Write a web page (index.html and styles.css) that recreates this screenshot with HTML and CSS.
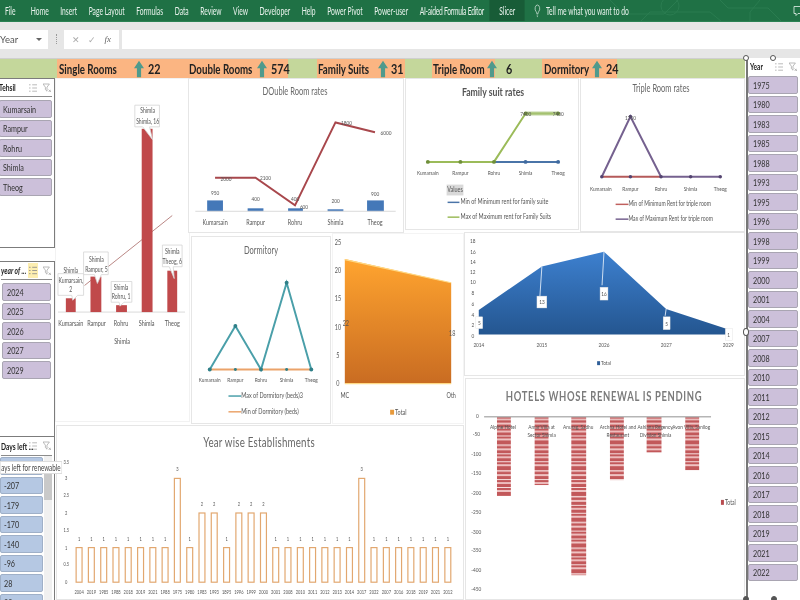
FILE: index.html
```html
<!DOCTYPE html>
<html lang="en">
<head>
<meta charset="utf-8">
<title>Hotel dashboard</title>
<link rel="stylesheet" href="styles.css">
</head>
<body>
<div class="app">
  <header class="ribbon">
    <svg class="circuit" viewBox="0 0 200 22"><path d="M10 0l14 14h40l14-14M40 22l10-10h60l12 10M120 0l8 8h40l14 14M150 22V12l10-12"/><circle cx="70" cy="6" r="9"/></svg>
    <nav class="tabs">
      <span class="tab">File</span><span class="tab">Home</span><span class="tab">Insert</span><span class="tab">Page Layout</span><span class="tab">Formulas</span><span class="tab">Data</span><span class="tab">Review</span><span class="tab">View</span><span class="tab">Developer</span><span class="tab">Help</span><span class="tab">Power Pivot</span><span class="tab">Power-user</span><span class="tab tab-ai">AI-aided Formula Editor</span><span class="tab tab-active">Slicer</span>
      <span class="tell">
        <svg class="bulb" viewBox="0 0 10 14"><path d="M5 1a3.600 3.600 0 0 0-2 6.600c.5.400.7 1 .7 1.800h2.600c0-.8.2-1.400.7-1.800A3.600 3.600 0 0 0 5 1zM3.800 11h2.400M4.200 12.600h1.600"/></svg>
        Tell me what you want to do
      </span>
    </nav>
    <svg class="comment" viewBox="0 0 12 12"><path d="M1 1.500h10v7H5l-2 2v-2H1z"/></svg>
  </header>

  <div class="formula-bar">
    <div class="namebox"><span>Year</span><span class="caret"></span></div>
    <span class="grip"></span>
    <div class="fx-box"><span class="fx-x">✕</span><span class="fx-check">✓</span><span class="fx-f">fx</span></div>
    <div class="formula-input"></div>
  </div>

  <main class="workspace">
    <div class="kpi-bar">
      <div class="kpi kpi-single"><b class="kpi-name">Single Rooms</b><svg class="up" viewBox="0 0 12 20"><path d="M6 0l6 9H8.500v11h-5V9H0z"/></svg><b class="kpi-num">22</b></div>
      <div class="kpi kpi-double"><b class="kpi-name">Double Rooms</b><svg class="up" viewBox="0 0 12 20"><path d="M6 0l6 9H8.500v11h-5V9H0z"/></svg><b class="kpi-num">574</b></div>
      <div class="kpi kpi-family"><b class="kpi-name">Family Suits</b><svg class="up" viewBox="0 0 12 20"><path d="M6 0l6 9H8.500v11h-5V9H0z"/></svg><b class="kpi-num">31</b></div>
      <div class="kpi kpi-triple"><b class="kpi-name">Triple Room</b><svg class="up" viewBox="0 0 12 20"><path d="M6 0l6 9H8.500v11h-5V9H0z"/></svg><b class="kpi-num">6</b></div>
      <div class="kpi kpi-dorm"><b class="kpi-name">Dormitory</b><svg class="up" viewBox="0 0 12 20"><path d="M6 0l6 9H8.500v11h-5V9H0z"/></svg><b class="kpi-num">24</b></div>
    </div>

    <!-- Bar chart -->
    <section class="chart c-shimla">
      <svg viewBox="55 78 135 344" class="plot">
        <line x1="57" y1="313" x2="186" y2="313" class="axis"/>
        <line x1="84" y1="286" x2="173" y2="215" class="trend"/>
        <g class="red">
          <rect x="65" y="299" width="10" height="14"/><rect x="90" y="277" width="11" height="36"/><rect x="116" y="306" width="11" height="7"/><rect x="142" y="127" width="11" height="186"/><rect x="168" y="271" width="10" height="42"/>
        </g>
        <g class="callout">
          <path d="M57 274h26v22H77l-5 5-1-5H57z"/>
          <path d="M83 252h25v23H101l-4 9-3-9H83z"/>
          <path d="M111 282h21v21h-8l-4 4-1-4h-8z"/>
          <path d="M135 103h25v22h-10l3 13-10-13h-8z"/>
          <path d="M163 245h20v22h-9l1 12-5-12h-7z"/>
        </g>
        <g class="tx t65 mid">
          <text x="70" y="273">Shimla</text><text x="70" y="283">Kumarsain,</text><text x="70" y="293">2</text>
          <text x="96" y="262">Shimla</text><text x="96" y="272">Rampur, 5</text>
          <text x="121" y="291">Shimla</text><text x="121" y="300">Rohru, 1</text>
          <text x="148" y="111">Shimla</text><text x="148" y="122">Shimla, 16</text>
          <text x="173" y="254">Shimla</text><text x="173" y="264">Theog, 6</text>
        </g>
        <g class="tx t7 mid">
          <text x="70" y="327">Kumarsain</text><text x="96" y="327">Rampur</text><text x="121" y="327">Rohru</text><text x="147" y="327">Shimla</text><text x="173" y="327">Theog</text>
          <text x="122" y="345">Shimla</text>
        </g>
      </svg>
    </section>

    <!-- Double room rates -->
    <section class="chart c-double">
      <svg viewBox="188 78 216 155" class="plot">
        <text x="295" y="94" class="title mid">DOuble Room rates</text>
        <g class="blue"><rect x="206" y="201" width="16" height="11"/><rect x="247" y="209" width="16" height="3"/><rect x="288" y="209" width="15" height="3"/><rect x="328" y="210" width="16" height="2"/><rect x="368" y="201" width="17" height="11"/></g>
        <line x1="194" y1="212" x2="397" y2="212" class="axis"/>
        <polyline points="214,178 255,178 295,206 336,122 376,132" class="ln ln-red"/>
        <g class="tx t6 mid">
          <text x="225" y="181">2000</text><text x="265" y="180">2100</text><text x="304" y="210">600</text><text x="347" y="125">1800</text><text x="387" y="135">6000</text>
          <text x="214" y="196">950</text><text x="255" y="202">400</text><text x="295" y="202">400</text><text x="336" y="204">200</text><text x="376" y="197">900</text>
        </g>
        <g class="tx t7 mid"><text x="214" y="226">Kumarsain</text><text x="255" y="226">Rampur</text><text x="295" y="226">Rohru</text><text x="336" y="226">Shimla</text><text x="376" y="226">Theog</text></g>
      </svg>
    </section>

    <!-- Family suit rates -->
    <section class="chart c-family">
      <svg viewBox="405 78 174 152" class="plot">
        <text x="493" y="95" class="title title-b mid">Family suit rates</text>
        <polyline points="427,162 559,162" class="ln ln-blue"/>
        <polyline points="427,162 460,162 494,162 526,113 559,113" class="ln ln-green"/>
        <polyline points="526,113 559,113" class="ln ln-glow"/>
        <g class="dot-blue"><circle cx="526" cy="162" r="2"/><circle cx="559" cy="162" r="2"/></g>
        <g class="dot-green"><circle cx="427" cy="162" r="2"/><circle cx="460" cy="162" r="2"/><circle cx="494" cy="162" r="2"/><circle cx="526" cy="113" r="2"/><circle cx="559" cy="113" r="2"/></g>
        <g class="tx t6 mid"><text x="526" y="116">7400</text><text x="559" y="116">7400</text>
          <text x="427" y="175">Kumarsain</text><text x="460" y="175">Rampur</text><text x="494" y="175">Rohru</text><text x="526" y="175">Shimla</text><text x="559" y="175">Theog</text></g>
        <rect x="446" y="185" width="17" height="11" class="chip"/>
        <text x="454.500" y="193" class="tx t7 mid">Values</text>
        <line x1="447" y1="203" x2="459" y2="203" class="ln-legend blue-s"/><line x1="447" y1="218" x2="459" y2="218" class="ln-legend green-s"/>
        <g class="tx t7 start"><text x="460" y="205">Min of Minimum rent for family suite</text><text x="460" y="220">Max of Maximum rent for Family Suits</text></g>
      </svg>
    </section>

    <!-- Triple room rates -->
    <section class="chart c-triple">
      <svg viewBox="580 78 165 154" class="plot">
        <text x="661" y="91" class="title mid">Triple Room rates</text>
        <polyline points="601,177 661,177" class="ln ln-red2"/>
        <polyline points="601,177 630,116 661,177 691,177 721,177" class="ln ln-purple"/>
        <g class="dot-purple"><circle cx="601" cy="177" r="1.800"/><circle cx="630" cy="177" r="1.800"/><circle cx="661" cy="177" r="1.800"/><circle cx="691" cy="177" r="1.800"/><circle cx="721" cy="177" r="1.800"/><circle cx="630" cy="116" r="1.800"/></g>
        <g class="tx t6 mid"><text x="630" y="120">1700</text><text x="600" y="191">Kumarsain</text><text x="630" y="191">Rampur</text><text x="661" y="191">Rohru</text><text x="691" y="191">Shimla</text><text x="721" y="191">Theog</text></g>
        <line x1="615" y1="205" x2="628" y2="205" class="ln-legend red-s"/><line x1="615" y1="220" x2="628" y2="220" class="ln-legend purple-s"/>
        <g class="tx t65 start"><text x="628" y="207">Min of Minimum Rent for triple room</text><text x="628" y="222">Max of Maximum Rent for triple room</text></g>
      </svg>
    </section>

    <!-- Dormitory -->
    <section class="chart c-dorm">
      <svg viewBox="191 236 140 188" class="plot">
        <text x="261" y="253" class="title mid">Dormitory</text>
        <line x1="209" y1="370" x2="312" y2="370" class="ln ln-orange"/>
        <polyline points="209,370 235,326 261,370 287,282 312,370" class="ln ln-teal"/>
        <g class="dot-teal"><circle cx="209" cy="370" r="2"/><circle cx="235" cy="326" r="2"/><circle cx="261" cy="370" r="2"/><circle cx="287" cy="282" r="2"/><circle cx="312" cy="370" r="2"/><circle cx="235" cy="370" r="1.500"/><circle cx="287" cy="370" r="1.500"/></g>
        <g class="tx t6 mid"><text x="209" y="383">Kumarsain</text><text x="235" y="383">Rampur</text><text x="261" y="383">Rohru</text><text x="287" y="383">Shimla</text><text x="312" y="383">Theog</text></g>
        <line x1="228" y1="397" x2="241" y2="397" class="ln-legend teal-s"/><line x1="228" y1="413" x2="241" y2="413" class="ln-legend orange-s"/>
        <g class="tx t7 start"><text x="241" y="399">Max of Dormitory (beds)3</text><text x="241" y="415">Min of Dormitory (beds)</text></g>
      </svg>
    </section>

    <!-- Orange area -->
    <section class="chart c-orange">
      <svg viewBox="332 233 132 191" class="plot">
        <defs><linearGradient id="og" x1="0" y1="0" x2="0" y2="1"><stop offset="0" stop-color="#ffa42f"/><stop offset="1" stop-color="#c96c22"/></linearGradient></defs>
        <polygon points="344,258 452,282 452,384 344,384" fill="url(#og)"/>
        <polyline points="344,258.500 452,282" class="edge"/>
        <line x1="344" y1="384.500" x2="452" y2="384.500" class="edge"/>
        <g class="tx t7 mid"><text x="337" y="244">25</text><text x="337" y="272">20</text><text x="337" y="301">15</text><text x="337" y="330">10</text><text x="337" y="358">5</text><text x="337" y="387">0</text>
          <text x="344" y="399">MC</text><text x="452" y="399">Oth</text><text x="345" y="326">22</text><text x="453" y="336">18</text></g>
        <rect x="390" y="411" width="4" height="5" class="sw-orange"/>
        <text x="395" y="416" class="tx t7 start">Total</text>
      </svg>
    </section>

    <!-- Blue area -->
    <section class="chart c-blue">
      <svg viewBox="464 232 281 144" class="plot">
        <defs><linearGradient id="bg" x1="0" y1="0" x2="0" y2="1"><stop offset="0" stop-color="#3d80cf"/><stop offset="1" stop-color="#245690"/></linearGradient></defs>
        <polygon points="477,310 541,266 604,251 667,309 728,329 728,335 477,335" fill="url(#bg)"/>
        <g class="leader"><line x1="541" y1="266" x2="539" y2="296"/><line x1="604" y1="251" x2="602" y2="285"/><line x1="667" y1="309" x2="666" y2="316"/></g>
        <g class="labelbox"><rect x="474" y="317" width="7" height="12"/><rect x="536" y="296" width="10" height="12"/><rect x="600" y="287" width="8" height="13"/><rect x="664" y="317" width="7" height="13"/><rect x="727" y="329" width="7" height="12"/></g>
        <g class="tx t6 mid">
          <text x="471" y="242">18</text><text x="471" y="253">16</text><text x="471" y="263">14</text><text x="471" y="274">12</text><text x="471" y="284">10</text><text x="471" y="295">8</text><text x="471" y="306">6</text><text x="471" y="317">4</text><text x="471" y="327">2</text><text x="471" y="338">0</text>
          <text x="477.500" y="325">5</text><text x="541" y="304">13</text><text x="604" y="296">16</text><text x="667.500" y="326">5</text><text x="730.500" y="337">1</text>
          <text x="477" y="348">2014</text><text x="541" y="348">2015</text><text x="604" y="348">2026</text><text x="667" y="348">2027</text><text x="730" y="348">2029</text>
          <text x="606" y="366">Total</text></g>
        <rect x="597" y="362" width="3" height="4" class="sw-blue"/>
      </svg>
    </section>

    <!-- Hotels renewal -->
    <section class="chart c-hotels">
      <svg viewBox="465 378 280 222" class="plot">
        <defs>
          <pattern id="stripes" width="14" height="26" patternUnits="userSpaceOnUse">
            <rect width="14" height="26" fill="#c2585a"/>
            <rect y="2" width="14" height="1.500" fill="#f3d3d3"/><rect y="6" width="14" height="2" fill="#efc3c3"/><rect y="11" width="14" height="1" fill="#f7e0e0"/><rect y="14" width="14" height="2" fill="#edbcbc"/><rect y="19" width="14" height="1" fill="#f7e0e0"/><rect y="22" width="14" height="2" fill="#efc3c3"/>
          </pattern>
        </defs>
        <text x="604" y="400" class="title title-h mid">HOTELS WHOSE RENEWAL IS PENDING</text>
        <g fill="url(#stripes)"><rect x="496" y="416" width="14" height="80"/><rect x="534" y="416" width="14" height="69"/><rect x="571" y="416" width="15" height="160"/><rect x="610" y="416" width="14" height="64"/><rect x="647" y="416" width="15" height="36"/><rect x="686" y="416" width="14" height="54"/></g>
        <line x1="483" y1="416" x2="712" y2="416" class="axis-dark"/>
        <g class="tx t6 mid">
          <text x="476" y="417">0</text><text x="475" y="436">-50</text><text x="475" y="456">-100</text><text x="475" y="475">-150</text><text x="475" y="495">-200</text><text x="475" y="514">-250</text><text x="475" y="534">-300</text><text x="475" y="553">-350</text><text x="475" y="573">-400</text><text x="475" y="592">-450</text>
          <text x="502" y="428">Alpine Hotel</text><text x="541" y="428">Amar Villa at</text><text x="541" y="437">Sector Shimla</text><text x="578" y="428">Anurag, Sadhu</text><text x="618" y="428">Archna Hotel and</text><text x="618" y="437">Restaurant</text><text x="656" y="428">Ashiana Regency,</text><text x="656" y="437">Division Shimla</text><text x="692" y="428">Avon Villa, Sanilog</text>
        </g>
        <rect x="722" y="500" width="3" height="5" class="sw-red"/>
        <text x="726" y="505" class="tx t65 start">Total</text>
      </svg>
    </section>

    <!-- Year wise -->
    <section class="chart c-year">
      <svg viewBox="56 425 408 175" class="plot">
        <text x="259" y="446" class="title title-l mid">Year wise Establishments</text>
        <g class="tx t5 mid"><text x="64" y="463">3.5</text><text x="64" y="480">3</text><text x="64" y="497">2.5</text><text x="64" y="515">2</text><text x="64" y="532">1.5</text><text x="64" y="550">1</text><text x="64" y="567">0.5</text><text x="64" y="585">0</text></g>
        <g class="outline-bars">
          <rect x="74" y="548" width="6" height="35"/><rect x="86.400" y="548" width="6" height="35"/><rect x="98.900" y="548" width="6" height="35"/><rect x="111.300" y="548" width="6" height="35"/><rect x="123.700" y="548" width="6" height="35"/><rect x="136.200" y="548" width="6" height="35"/><rect x="148.600" y="548" width="6" height="35"/><rect x="161" y="548" width="6" height="35"/>
          <rect x="173.400" y="478" width="6" height="105"/><rect x="185.900" y="548" width="6" height="35"/><rect x="198.300" y="513" width="6" height="70"/><rect x="210.700" y="513" width="6" height="70"/><rect x="223.200" y="548" width="6" height="35"/><rect x="235.600" y="513" width="6" height="70"/><rect x="248" y="513" width="6" height="70"/><rect x="260.500" y="513" width="6" height="70"/>
          <rect x="272.900" y="548" width="6" height="35"/><rect x="285.300" y="548" width="6" height="35"/><rect x="297.800" y="548" width="6" height="35"/><rect x="310.200" y="548" width="6" height="35"/><rect x="322.600" y="548" width="6" height="35"/><rect x="335" y="548" width="6" height="35"/><rect x="347.500" y="548" width="6" height="35"/>
          <rect x="359.900" y="478" width="6" height="105"/><rect x="372.300" y="548" width="6" height="35"/><rect x="384.800" y="548" width="6" height="35"/><rect x="397.200" y="548" width="6" height="35"/><rect x="409.600" y="548" width="6" height="35"/><rect x="422.100" y="548" width="6" height="35"/><rect x="434.500" y="548" width="6" height="35"/><rect x="447" y="548" width="6" height="35"/>
        </g>
        <g class="tx t5 mid">
          <text x="77" y="541">1</text><text x="89.400" y="541">1</text><text x="101.900" y="541">1</text><text x="114.300" y="541">1</text><text x="126.700" y="541">1</text><text x="139.200" y="541">1</text><text x="151.600" y="541">1</text><text x="164" y="541">1</text><text x="176.400" y="471">3</text><text x="188.900" y="541">1</text><text x="201.300" y="506">2</text><text x="213.700" y="506">2</text><text x="226.200" y="541">1</text><text x="238.600" y="506">2</text><text x="251" y="506">2</text><text x="263.500" y="506">2</text><text x="275.900" y="541">1</text><text x="288.300" y="541">1</text><text x="300.800" y="541">1</text><text x="313.200" y="541">1</text><text x="325.600" y="541">1</text><text x="338" y="541">1</text><text x="350.500" y="541">1</text><text x="362.900" y="471">3</text><text x="375.300" y="541">1</text><text x="387.800" y="541">1</text><text x="400.200" y="541">1</text><text x="412.600" y="541">1</text><text x="425.100" y="541">1</text><text x="437.500" y="541">1</text><text x="450" y="541">1</text>
          <text x="77" y="595">2004</text><text x="89.400" y="595">2019</text><text x="101.900" y="595">1985</text><text x="114.300" y="595">1988</text><text x="126.700" y="595">2018</text><text x="139.200" y="595">2019</text><text x="151.600" y="595">2021</text><text x="164" y="595">1988</text><text x="176.400" y="595">1975</text><text x="188.900" y="595">1980</text><text x="201.300" y="595">1983</text><text x="213.700" y="595">1993</text><text x="226.200" y="595">1895</text><text x="238.600" y="595">1996</text><text x="251" y="595">1999</text><text x="263.500" y="595">2000</text><text x="275.900" y="595">2001</text><text x="288.300" y="595">2008</text><text x="300.800" y="595">2010</text><text x="313.200" y="595">2011</text><text x="325.600" y="595">2012</text><text x="338" y="595">2013</text><text x="350.500" y="595">2014</text><text x="362.900" y="595">2017</text><text x="375.300" y="595">2022</text><text x="387.800" y="595">2007</text><text x="400.200" y="595">2016</text><text x="412.600" y="595">2018</text><text x="425.100" y="595">2019</text><text x="437.500" y="595">2021</text><text x="450" y="595">2012</text>
        </g>
      </svg>
    </section>

    <!-- Slicers -->
    <aside class="slicer s-tehsil">
      <div class="slicer-head"><b class="head-name">Tehsil</b>
        <svg class="ic" viewBox="0 0 10 12"><path d="M0 2h2M0 6h2M0 10h2M4 2h6M4 6h6M4 10h6"/></svg>
        <svg class="ic" viewBox="0 0 10 12"><path d="M0 1h8L5 5v5L3 8V5zM7 8l3 3M10 8l-3 3"/></svg>
      </div>
      <div class="items">
        <div class="item"><span>Kumarsain</span></div><div class="item"><span>Rampur</span></div><div class="item"><span>Rohru</span></div><div class="item"><span>Shimla</span></div><div class="item"><span>Theog</span></div>
      </div>
    </aside>

    <aside class="slicer s-yearof">
      <div class="slicer-head"><b class="head-name head-i">year of ...</b>
        <svg class="ic ic-on" viewBox="0 0 10 12"><path d="M0 2h2M0 6h2M0 10h2M4 2h6M4 6h6M4 10h6"/></svg>
        <svg class="ic" viewBox="0 0 10 12"><path d="M0 1h8L5 5v5L3 8V5zM7 8l3 3M10 8l-3 3"/></svg>
      </div>
      <div class="items">
        <div class="item"><span>2024</span></div><div class="item"><span>2025</span></div><div class="item"><span>2026</span></div><div class="item"><span>2027</span></div><div class="item"><span>2029</span></div>
      </div>
    </aside>

    <aside class="slicer s-days">
      <div class="slicer-head"><b class="head-name">Days left ...</b>
        <svg class="ic" viewBox="0 0 10 12"><path d="M0 2h2M0 6h2M0 10h2M4 2h6M4 6h6M4 10h6"/></svg>
        <svg class="ic" viewBox="0 0 10 12"><path d="M0 1h8L5 5v5L3 8V5zM7 8l3 3M10 8l-3 3"/></svg>
      </div>
      <div class="days-body">
        <div class="items items-blue">
          <div class="item item-blue item-hidden"></div><div class="item item-blue"><span>-207</span></div><div class="item item-blue"><span>-179</span></div><div class="item item-blue"><span>-170</span></div><div class="item item-blue"><span>-140</span></div><div class="item item-blue"><span>-96</span></div><div class="item item-blue"><span>28</span></div><div class="item item-blue"><span>32</span></div>
        </div>
        <div class="scrollbar"><span class="thumb"></span></div>
      </div>
      <div class="tooltip">ays left for renewable</div>
    </aside>

    <aside class="slicer s-year">
      <div class="slicer-head"><b class="head-name">Year</b>
        <svg class="ic" viewBox="0 0 10 12"><path d="M0 2h2M0 6h2M0 10h2M4 2h6M4 6h6M4 10h6"/></svg>
        <svg class="ic" viewBox="0 0 10 12"><path d="M0 1h8L5 5v5L3 8V5zM7 8l3 3M10 8l-3 3"/></svg>
      </div>
      <div class="items items-year">
        <div class="item"><span>1975</span></div><div class="item"><span>1980</span></div><div class="item"><span>1983</span></div><div class="item"><span>1985</span></div><div class="item"><span>1988</span></div><div class="item"><span>1993</span></div><div class="item"><span>1995</span></div><div class="item"><span>1996</span></div><div class="item"><span>1998</span></div><div class="item"><span>1999</span></div><div class="item"><span>2000</span></div><div class="item"><span>2001</span></div><div class="item"><span>2004</span></div><div class="item"><span>2007</span></div><div class="item"><span>2008</span></div><div class="item"><span>2010</span></div><div class="item"><span>2011</span></div><div class="item"><span>2012</span></div><div class="item"><span>2015</span></div><div class="item"><span>2014</span></div><div class="item"><span>2016</span></div><div class="item"><span>2017</span></div><div class="item"><span>2018</span></div><div class="item"><span>2019</span></div><div class="item"><span>2021</span></div><div class="item"><span>2022</span></div>
      </div>
      <span class="handle h-tl"></span><span class="handle h-tm"></span><span class="handle h-ml"></span><span class="handle h-bl"></span><span class="handle h-bm"></span>
    </aside>
  </main>
</div>
</body>
</html>
```

FILE: styles.css
```css
* { box-sizing: border-box; }
html, body { margin: 0; height: 100%; overflow: hidden; background: #fff; }
.app {
  width: 800px; height: 600px; overflow: hidden;
  font-family: Lato, "Liberation Sans", sans-serif;
  color: #333; display: flex; flex-direction: column;
  filter: blur(0.5px);
}

/* ribbon */
.ribbon { position: relative; height: 22px; background: #1f7145; border-bottom: 1px solid #2a8253; display: flex; align-items: center; color: #e8f2ec; font-size: 10.5px; flex: none; overflow: hidden; }
.circuit { position: absolute; left: 600px; top: 0; width: 200px; height: 22px; fill: none; stroke: #2a7c50; stroke-width: 1; }
.tabs { position: relative; display: flex; align-items: center; height: 100%; margin-left: 3px; flex: 1; min-width: 0; transform: scaleX(.64); transform-origin: left center; }
.tab { padding: 0 9px; height: 100%; display: flex; align-items: center; white-space: nowrap; flex: none; }
.tab:first-child { margin: 0 6px 0 -6px; }
.tab-ai { letter-spacing: -.4px; }
.tab-active { background: #185c37; padding: 0 15px; }
.tell { display: flex; align-items: center; gap: 6px; margin-left: 13px; white-space: nowrap; flex: none; }
.bulb { width: 14px; height: 14px; fill: none; stroke: #e8f2ec; stroke-width: .8; }
.comment { position: relative; width: 12px; height: 12px; fill: none; stroke: #e8f2ec; stroke-width: .8; margin-right: -5px; flex: none; }

/* formula bar */
.formula-bar { height: 36px; background: #e6e6e6; display: flex; align-items: center; gap: 4px; padding-bottom: 2px; flex: none; }
.namebox { width: 48px; height: 19px; background: #fff; display: flex; align-items: center; justify-content: space-between; padding: 0 6px 0 0; font-size: 9.500px; color: #555; }
.caret { border: 3px solid transparent; border-top: 3px solid #666; margin-top: 3px; }
.grip { width: 1px; height: 10px; border-left: 1px dotted #999; margin: 0 3px 0 4px; }
.fx-box { width: 55px; height: 19px; background: #fff; display: flex; align-items: center; justify-content: space-around; padding: 0 4px; font-size: 9px; color: #aaa; }
.fx-f { font-style: italic; color: #666; font-family: "Liberation Serif", serif; }
.formula-input { flex: 1; height: 19px; background: #fff; margin-left: -1px; }

/* sheet */
.workspace { position: relative; flex: 1; background: #fff; }
.kpi-bar { height: 20px; width: 745px; background: #c4d79b; display: flex; border-top: 1px solid #cfcfcf; padding-left: 57px; font-size: 13.500px; color: #222; }
.kpi { background: #fbb582; display: flex; align-items: center; white-space: nowrap; flex: none; }
.kpi-name { font-weight: 700; flex: none; transform: scaleX(.72); transform-origin: left center; }
.up { width: 10px; height: 18px; fill: #4f9a8c; flex: none; }
.kpi-num { font-weight: 700; flex: none; transform: scaleX(.8); transform-origin: left center; }
.kpi-single { width: 130px; padding-left: 2px; }
.kpi-single .kpi-name { width: 75px; }
.kpi-single .kpi-num { margin-left: 4px; }
.kpi-double { width: 101px; padding-left: 2px; }
.kpi-double .kpi-name { width: 68px; }
.kpi-double .kpi-num { margin-left: 4px; }
.kpi-family { width: 88px; margin-left: 29px; padding-left: 1px; }
.kpi-family .kpi-name { width: 60px; }
.kpi-family .kpi-num { margin-left: 3px; }
.kpi-triple { width: 63px; margin-left: 27px; padding-left: 1px; }
.kpi-triple .kpi-name { width: 54px; }
.kpi-triple .kpi-num { margin-left: 9px; }
.kpi-dorm { width: 75px; margin-left: 47px; padding-left: 2px; }
.kpi-dorm .kpi-name { width: 48px; }
.kpi-dorm .kpi-num { margin-left: 4px; }

/* floating chart objects */
.chart { position: absolute; background: #fff; border: 1px solid #e6e6e6; overflow: hidden; }
.plot { display: block; width: 100%; height: 100%; }
.c-shimla { left: 55px; top: 20px; width: 135px; height: 344px; border-color: #f2f2f2; }
.c-double { left: 188px; top: 20px; width: 216px; height: 155px; }
.c-family { left: 405px; top: 20px; width: 174px; height: 152px; }
.c-triple { left: 580px; top: 20px; width: 165px; height: 154px; }
.c-dorm { left: 191px; top: 178px; width: 140px; height: 188px; }
.c-orange { left: 332px; top: 175px; width: 132px; height: 191px; border-color: #f4f4f4; }
.c-blue { left: 464px; top: 174px; width: 281px; height: 144px; }
.c-hotels { left: 465px; top: 320px; width: 280px; height: 222px; }
.c-year { left: 56px; top: 367px; width: 408px; height: 175px; }

/* chart marks: the reference's type is condensed, so every label is narrowed about its anchor */
text { transform-box: fill-box; transform-origin: center; transform: scaleX(.74); }
.start text, text.start { transform-origin: left center; }
.tx { fill: #555; font-family: Lato, sans-serif; }
.t5 { font-size: 5.500px; }
.t6 { font-size: 6.500px; }
.t65 { font-size: 7px; }
.t7 { font-size: 7.500px; }
.mid { text-anchor: middle; }
.title { font-size: 11.500px; fill: #686868; font-family: Lato, sans-serif; transform: scaleX(.66); }
.title-b { font-weight: 700; font-size: 11px; fill: #555; transform: scaleX(.8); }
.title-h { font-weight: 700; font-size: 14px; letter-spacing: 1px; fill: #7b7b7b; transform: scaleX(.68); }
.title-l { font-size: 13.500px; letter-spacing: .3px; transform: scaleX(.73); }
.axis { stroke: #d9d9d9; stroke-width: 1; }
.axis-dark { stroke: #b5b5b5; stroke-width: 1.500; }
.red { fill: #c0494b; }
.blue { fill: #4478b8; }
.trend { stroke: #b98583; stroke-width: 1; }
.callout { fill: #fff; stroke: #d4d4d4; stroke-width: .8; }
.ln { fill: none; stroke-width: 2; }
.ln-red { stroke: #a8474c; }
.ln-blue { stroke: #4a74a8; }
.ln-green { stroke: #9bbb59; }
.ln-glow { stroke: #a9c47a; stroke-width: 4; opacity: .7; }
.ln-red2 { stroke: #b55a5a; }
.ln-purple { stroke: #75618f; }
.ln-orange { stroke: #eba36a; }
.ln-teal { stroke: #4a9fa9; }
.ln-legend { stroke-width: 1.500; }
.blue-s { stroke: #4a74a8; }
.green-s { stroke: #9bbb59; }
.red-s { stroke: #c0605e; }
.purple-s { stroke: #75618f; }
.teal-s { stroke: #4a9fa9; }
.orange-s { stroke: #eba36a; }
.dot-blue { fill: #3f6a9f; }
.dot-green { fill: #6f8f3a; }
.dot-purple { fill: #544470; }
.dot-teal { fill: #2f7f88; }
.chip { fill: #d9d9d9; }
.edge { stroke: #ffd985; stroke-width: 1.200; fill: none; }
.sw-orange { fill: #e79a3c; }
.sw-blue { fill: #2f5f99; }
.sw-red { fill: #b84c50; }
.leader { stroke: #cfe0f2; stroke-width: 1; }
.labelbox { fill: #fff; stroke: #ddd; stroke-width: .4; }
.outline-bars { fill: #fff; stroke: #e2a76f; stroke-width: 1.200; }

/* slicers */
.slicer { position: absolute; background: #fff; border: 1px solid #7c7c7c; display: flex; flex-direction: column; padding: 0 2px; }
.slicer-head { height: 18px; flex: none; display: flex; align-items: center; gap: 6px; padding-right: 1px; border-bottom: 1.500px solid #8c8c8c; font-size: 9.500px; color: #222; }
.head-name { flex: 1; min-width: 0; white-space: nowrap; transform: scaleX(.7); transform-origin: left center; }
.head-i { font-style: italic; }
.ic { width: 8px; height: 10px; fill: none; stroke: #aaa; stroke-width: 1; flex: none; }
.ic-on { width: 10px; height: 15px; background: #fdeeb0; stroke: #888; padding: 1px; margin-right: -1px; }
.items { display: flex; flex-direction: column; gap: 2px; padding-top: 3px; }
.item { height: 17.500px; flex: none; background: #ccc0da; border: 1px solid #a9a5b2; border-radius: 2px; font-size: 10px; padding-left: 3px; display: flex; align-items: center; color: #333; white-space: nowrap; }
.item span { transform: scaleX(.72); transform-origin: left center; }
.item-blue { background: #b5c8e3; border-color: #9fb0c8; }

.s-tehsil { left: -4px; top: 20px; width: 59px; height: 170px; }
.s-yearof { left: -2px; top: 203px; width: 57px; height: 233px; }
.s-yearof .item { margin: 0 1px; padding-left: 4px; }
.s-days { left: -2px; top: 378px; width: 57px; height: 164px; border-bottom: 0; }
.s-days .slicer-head { height: 19px; }
.days-body { display: flex; gap: 1px; flex: 1; min-height: 0; overflow: hidden; margin-left: -1px; }
.items-blue { width: 43px; flex: none; padding-top: 1px; }
.scrollbar { width: 9px; background: #f0f0f0; position: relative; }
.thumb { position: absolute; left: 0; top: 14px; width: 100%; height: 30px; background: #c9c9c9; }
.tooltip { position: absolute; left: 1px; top: 24px; height: 13px; padding: 0 1px; background: #fff; border: 1px solid #ddd; font-size: 9.500px; line-height: 11px; color: #444; white-space: nowrap; transform: scaleX(.66); transform-origin: left center; }
.s-year { left: 746px; top: 0; width: 56px; height: 542px; border-width: 0 0 0 2px; border-color: #777; padding: 0 4px 0 0; }
.s-year .slicer-head { border: 0; height: 17px; padding-left: 2px; }
.items-year { padding-top: 1px; }
.s-year .item { padding-left: 4px; }
.handle { position: absolute; width: 6px; height: 6px; border-radius: 50%; border: 1px solid #555; background: #fff; }
.h-tl { left: -5px; top: -3px; }
.h-tm { left: 22px; top: -3px; }
.h-ml { left: -5px; top: 270px; height: 8px; }
.h-bl { left: -5px; top: 538px; background: #555; }
.h-bm { left: 23px; top: 538px; background: #555; }
```
